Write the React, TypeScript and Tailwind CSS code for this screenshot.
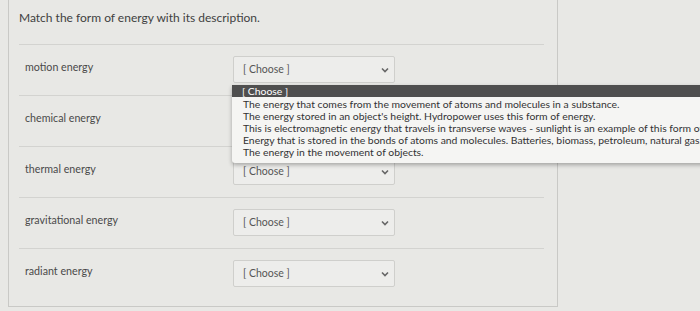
const rows = [
  "motion energy",
  "chemical energy",
  "thermal energy",
  "gravitational energy",
  "radiant energy",
];

const options = [
  "The energy that comes from the movement of atoms and molecules in a substance.",
  "The energy stored in an object's height. Hydropower uses this form of energy.",
  "This is electromagnetic energy that travels in transverse waves - sunlight is an example of this form of energy.",
  "Energy that is stored in the bonds of atoms and molecules. Batteries, biomass, petroleum, natural gas, and coal are examples.",
  "The energy in the movement of objects.",
];

function Chevron() {
  return (
    <svg width="8" height="6" viewBox="0 0 8 6" className="text-[#666]">
      <path d="M1 1.5 L4 4.5 L7 1.5" fill="none" stroke="currentColor" strokeWidth="1.6" />
    </svg>
  );
}

function Select() {
  return (
    <div className="mt-[11px] flex h-[27px] w-[162px] items-center justify-between rounded-[2px] border border-[#cfcfcc] bg-[#ededeb] pl-[9px] pr-[5px]">
      <span className="text-[10.5px] text-[#555]">[ Choose ]</span>
      <Chevron />
    </div>
  );
}

export default function App() {
  return (
    <div
      className="relative flex h-[311px] w-[700px] overflow-hidden bg-[#e8e8e5]"
      style={{ fontFamily: "Lato, 'Open Sans', sans-serif" }}
    >
      <div className="ml-[8px] flex h-[307px] w-[550px] flex-col border-x border-b border-[#c9c9c6]">
        <div className="h-[44px] pl-[10px] pt-[9px] text-[12px] text-[#3f3f3f]">
          Match the form of energy with its description.
        </div>
        <div className="mx-[10px] w-[525px] border-t border-[#d3d3d0]" />
        {rows.map((r, i) => (
          <div key={r} className="flex flex-col">
            <div className="flex h-[50px] pl-[16px]">
              <div className="w-[208px] pt-[14px] text-[10.7px] text-[#4a4a4a]">{r}</div>
              <Select />
            </div>
            {i < rows.length - 1 && (
              <div className="mx-[10px] w-[525px] border-t border-[#d3d3d0]" />
            )}
          </div>
        ))}
      </div>

      {/* open dropdown menu, runs past the window edge */}
      <div className="absolute left-[232px] top-[85px] w-[480px] overflow-hidden rounded-b-[3px] bg-[#f5f5f3] shadow-[0_2px_4px_rgba(0,0,0,0.3)]">
        <div className="h-[12px] bg-[#4f4f4f] pl-[10px] text-[10.4px] leading-[12px] text-white">[ Choose ]</div>
        <div className="pb-[5px] pl-[11px] pt-[1px]">
          {options.map((o) => (
            <div key={o} className="whitespace-nowrap text-[10.4px] leading-[12px] text-[#333]">
              {o}
            </div>
          ))}
        </div>
      </div>
    </div>
  );
}
